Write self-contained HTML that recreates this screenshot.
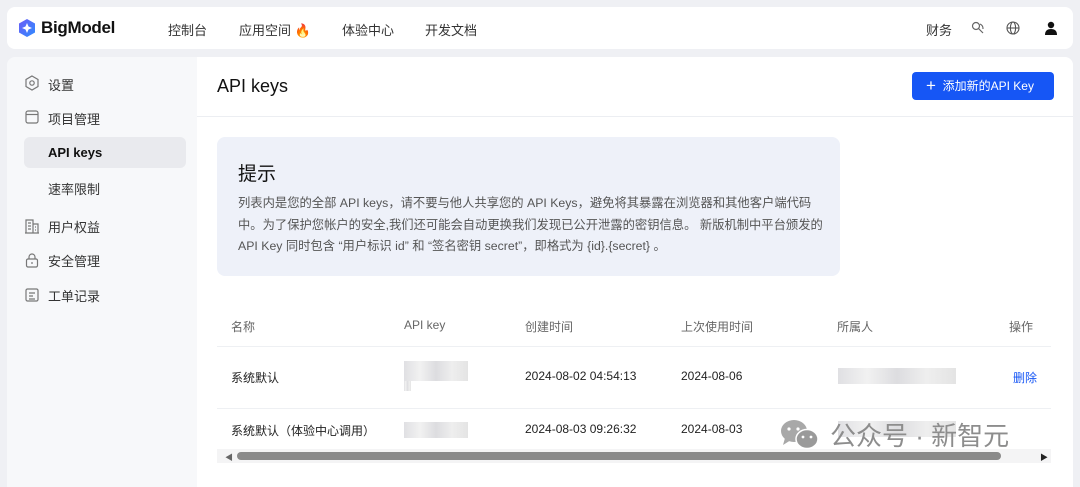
<!DOCTYPE html>
<html><head><meta charset="utf-8"><style>
*{margin:0;padding:0;box-sizing:border-box}
body{width:1080px;height:482px;overflow:hidden;background:#eff0f4;font-family:"Liberation Sans","Noto Sans CJK SC",sans-serif;color:#222;position:relative}
.hdr{position:absolute;left:7px;top:7px;width:1066px;height:42px;background:#fff;border-radius:8px}
.abs{position:absolute;white-space:nowrap}
.nav{font-size:13px;color:#333;top:14px}
.side{position:absolute;left:7px;top:57px;width:190px;height:430px;background:#f7f8fa;border-radius:8px 0 0 0}
.main{position:absolute;left:197px;top:57px;width:876px;height:430px;background:#fff;border-radius:0 8px 0 0}
.si{font-size:13px;color:#333}
.th{font-size:12px;color:#666;top:318px}
.td{font-size:12px;color:#222}
.blur{position:absolute;background:linear-gradient(90deg,#d8d8dc,#eee,#d4d4d8,#eaeaea,#ddd);opacity:.8}
</style></head><body>
<div class="hdr"></div>
<svg class="abs" style="left:18px;top:19px" width="18" height="18" viewBox="0 0 18 18"><defs><linearGradient id="g" x1="0" y1="0" x2="1" y2="1"><stop offset="0" stop-color="#6b5cf6"/><stop offset="1" stop-color="#2f8cff"/></linearGradient></defs><path d="M9 0 L17 4.5 V13.5 L9 18 L1 13.5 V4.5Z" fill="url(#g)"/><path d="M9 4 L10.5 7.5 L14 9 L10.5 10.5 L9 14 L7.5 10.5 L4 9 L7.5 7.5Z" fill="#fff"/></svg>
<div class="abs" style="left:41px;top:18px;font-size:17px;font-weight:bold;color:#111;letter-spacing:-0.3px">BigModel</div>
<div class="abs nav" style="left:168px;top:20px">控制台</div>
<div class="abs nav" style="left:239px;top:20px">应用空间 <span style="color:#f26a1b">🔥</span></div>
<div class="abs nav" style="left:342px;top:20px">体验中心</div>
<div class="abs nav" style="left:425px;top:20px">开发文档</div>
<div class="abs nav" style="left:926px;top:20px">财务</div>
<svg class="abs" style="left:971px;top:21px" width="14" height="14" viewBox="0 0 14 14" fill="none" stroke="#666" stroke-width="1.2"><circle cx="5" cy="5" r="3.5"/><path d="M7.5 7.5 L12 12 M9 3 a5 5 0 0 1 3 5"/></svg>
<svg class="abs" style="left:1006px;top:21px" width="14" height="14" viewBox="0 0 14 14" fill="none" stroke="#555" stroke-width="1.1"><circle cx="7" cy="7" r="6"/><ellipse cx="7" cy="7" rx="2.6" ry="6"/><path d="M1 7h12"/></svg>
<svg class="abs" style="left:1045px;top:21px" width="12" height="14" viewBox="0 0 12 14"><circle cx="6" cy="4" r="3.2" fill="#111"/><path d="M0 14 Q0 8 6 8 Q12 8 12 14Z" fill="#111"/></svg>

<div class="side"></div>
<div class="main"></div>
<svg class="abs" style="left:24px;top:75px" width="16" height="16" viewBox="0 0 16 16" fill="none" stroke="#777" stroke-width="1.2"><path d="M8 1 L14 4.5 V11.5 L8 15 L2 11.5 V4.5Z"/><circle cx="8" cy="8" r="2.2"/></svg>
<div class="abs si" style="left:48px;top:75px">设置</div>
<svg class="abs" style="left:24px;top:109px" width="16" height="16" viewBox="0 0 16 16" fill="none" stroke="#777" stroke-width="1.2"><rect x="2" y="2" width="12" height="12" rx="2"/><path d="M2 5.5h12"/></svg>
<div class="abs si" style="left:48px;top:109px">项目管理</div>
<div class="abs" style="left:24px;top:137px;width:162px;height:31px;background:#e9eaee;border-radius:6px"></div>
<div class="abs si" style="left:48px;top:145px;font-weight:bold;color:#111">API keys</div>
<div class="abs si" style="left:48px;top:179px">速率限制</div>
<svg class="abs" style="left:24px;top:218px" width="16" height="16" viewBox="0 0 16 16" fill="none" stroke="#777" stroke-width="1.2"><path d="M2 15V2h7v13M9 6h5v9M1 15h14M4 5h3M4 8h3M4 11h3M11 9h1M11 12h1"/></svg>
<div class="abs si" style="left:48px;top:217px">用户权益</div>
<svg class="abs" style="left:24px;top:252px" width="16" height="16" viewBox="0 0 16 16" fill="none" stroke="#777" stroke-width="1.2"><rect x="2.5" y="7" width="11" height="8" rx="1.5"/><path d="M5 7V5a3 3 0 0 1 6 0v2M8 10v2"/></svg>
<div class="abs si" style="left:48px;top:251px">安全管理</div>
<svg class="abs" style="left:24px;top:287px" width="16" height="16" viewBox="0 0 16 16" fill="none" stroke="#777" stroke-width="1.2"><rect x="2" y="2" width="12" height="12" rx="1.5"/><path d="M5 6h6M5 9h4M5 12h6"/></svg>
<div class="abs si" style="left:48px;top:286px">工单记录</div>

<div class="abs" style="left:217px;top:76px;font-size:18px;color:#111">API keys</div>
<div class="abs" style="left:912px;top:72px;width:142px;height:28px;background:#1656f5;border-radius:4px;color:#fff;font-size:12px;line-height:28px;padding-left:14px"><span style="font-size:17px;vertical-align:-1px">+</span>&nbsp;&nbsp;添加新的API Key</div>
<div class="abs" style="left:197px;top:116px;width:876px;height:1px;background:#eceef2"></div>

<div class="abs" style="left:217px;top:137px;width:623px;height:139px;background:#eef1f9;border-radius:8px"></div>
<div class="abs" style="left:238px;top:159px;font-size:19px;color:#111">提示</div>
<div class="abs" style="left:238px;top:193px;width:585px;white-space:normal;font-size:12.3px;line-height:21.5px;color:#555">列表内是您的全部 API keys，请不要与他人共享您的 API Keys，避免将其暴露在浏览器和其他客户端代码中。为了保护您帐户的安全,我们还可能会自动更换我们发现已公开泄露的密钥信息。 新版机制中平台颁发的 API Key 同时包含 “用户标识 id” 和 “签名密钥 secret”，即格式为 {id}.{secret} 。</div>

<div class="abs th" style="left:231px">名称</div>
<div class="abs th" style="left:404px">API key</div>
<div class="abs th" style="left:525px">创建时间</div>
<div class="abs th" style="left:681px">上次使用时间</div>
<div class="abs th" style="left:837px">所属人</div>
<div class="abs th" style="left:1009px">操作</div>
<div class="abs" style="left:217px;top:346px;width:834px;height:1px;background:#eef0f3"></div>
<div class="abs" style="left:217px;top:408px;width:834px;height:1px;background:#eef0f3"></div>
<div class="abs td" style="left:231px;top:369px">系统默认</div>
<div class="blur" style="left:404px;top:361px;width:64px;height:20px"></div>
<div class="blur" style="left:404px;top:381px;width:7px;height:10px"></div>
<div class="abs td" style="left:525px;top:369px">2024-08-02 04:54:13</div>
<div class="abs td" style="left:681px;top:369px">2024-08-06</div>
<div class="blur" style="left:838px;top:368px;width:118px;height:16px"></div>
<div class="abs td" style="left:1013px;top:369px;color:#1656f5">删除</div>
<div class="abs td" style="left:231px;top:422px">系统默认（体验中心调用）</div>
<div class="blur" style="left:404px;top:422px;width:64px;height:16px"></div>
<div class="abs td" style="left:525px;top:422px">2024-08-03 09:26:32</div>
<div class="abs td" style="left:681px;top:422px">2024-08-03</div>
<div class="blur" style="left:838px;top:421px;width:118px;height:16px"></div>
<div class="abs" style="left:217px;top:449px;width:834px;height:14px;background:#f4f4f5"></div>
<div class="abs" style="left:237px;top:452px;width:764px;height:8px;background:#8a8a8a;border-radius:4px"></div>
<div class="abs" style="left:225px;top:452px;font-size:8px;color:#666">◀</div>
<div class="abs" style="left:1040px;top:452px;font-size:8px;color:#222">▶</div>
<svg class="abs" style="left:780px;top:418px" width="40" height="34" viewBox="0 0 40 34"><ellipse cx="14" cy="13" rx="13" ry="11" fill="#a8a8a8"/><path d="M5 20 L3 27 L11 22Z" fill="#a8a8a8"/><ellipse cx="27" cy="21" rx="11" ry="9.5" fill="#9a9a9a" stroke="#fff" stroke-width="1.5"/><circle cx="9" cy="11" r="1.6" fill="#fff"/><circle cx="18" cy="11" r="1.6" fill="#fff"/><circle cx="23" cy="19" r="1.4" fill="#fff"/><circle cx="31" cy="19" r="1.4" fill="#fff"/></svg>
<div class="abs" style="left:830px;top:420px;font-size:26px;color:#8d8d8d;line-height:32px">公众号 · 新智元</div>
</body></html>
